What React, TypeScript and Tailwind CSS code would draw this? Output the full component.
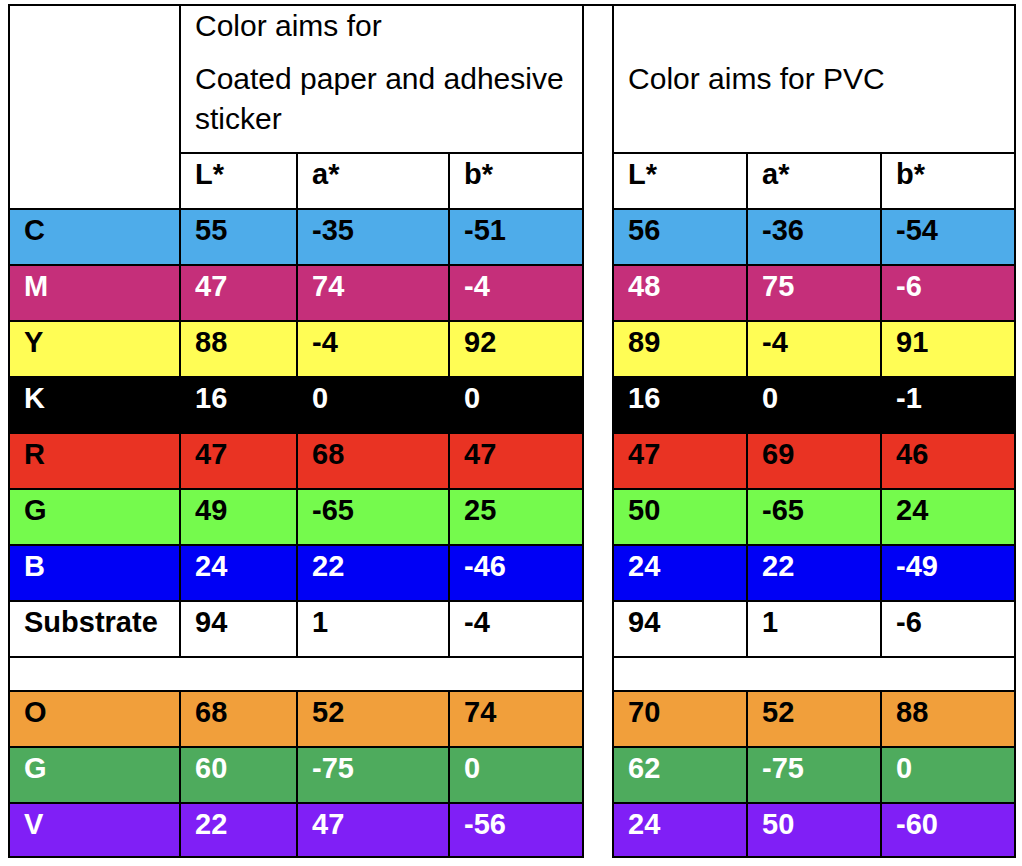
type Row = {
  label: string
  left: string[]
  right: string[]
  bg: string
  fg: string
  h: string
}

const top: Row[] = [
  { label: "C", left: ["55", "-35", "-51"], right: ["56", "-36", "-54"], bg: "bg-[#4eacea]", fg: "text-black", h: "h-[56px]" },
  { label: "M", left: ["47", "74", "-4"], right: ["48", "75", "-6"], bg: "bg-[#c52f7a]", fg: "text-white", h: "h-[56px]" },
  { label: "Y", left: ["88", "-4", "92"], right: ["89", "-4", "91"], bg: "bg-[#fffd55]", fg: "text-black", h: "h-[56px]" },
  { label: "K", left: ["16", "0", "0"], right: ["16", "0", "-1"], bg: "bg-black", fg: "text-white", h: "h-[56px]" },
  { label: "R", left: ["47", "68", "47"], right: ["47", "69", "46"], bg: "bg-[#e93323]", fg: "text-black", h: "h-[56px]" },
  { label: "G", left: ["49", "-65", "25"], right: ["50", "-65", "24"], bg: "bg-[#75fa4d]", fg: "text-black", h: "h-[56px]" },
  { label: "B", left: ["24", "22", "-46"], right: ["24", "22", "-49"], bg: "bg-[#0000f5]", fg: "text-white", h: "h-[56px]" },
  { label: "Substrate", left: ["94", "1", "-4"], right: ["94", "1", "-6"], bg: "bg-white", fg: "text-black", h: "h-[56px]" },
]

const bottom: Row[] = [
  { label: "O", left: ["68", "52", "74"], right: ["70", "52", "88"], bg: "bg-[#f19f3b]", fg: "text-black", h: "h-[56px]" },
  { label: "G", left: ["60", "-75", "0"], right: ["62", "-75", "0"], bg: "bg-[#4eab5d]", fg: "text-white", h: "h-[56px]" },
  { label: "V", left: ["22", "47", "-56"], right: ["24", "50", "-60"], bg: "bg-[#801ff6]", fg: "text-white", h: "h-[54px]" },
]

const cell = "border-2 border-black align-top pl-[14px] pt-0 leading-[40px]"

function DataRow({ row }: { row: Row }) {
  return (
    <tr className={`${row.h} ${row.bg} ${row.fg} font-bold text-[29px]`}>
      <td className={cell}>{row.label}</td>
      {row.left.map((v, i) => (
        <td key={"l" + i} className={cell}>{v}</td>
      ))}
      {row.right.map((v, i) => (
        <td key={"r" + i} className={cell}>{v}</td>
      ))}
    </tr>
  )
}

export default function App() {
  return (
    <div className="bg-white min-h-[866px] w-[1022px] pl-[8px] pt-[4px] font-['Liberation_Sans',Arial,sans-serif] text-black">
      <table className="table-fixed border-collapse w-[1006px]">
        <colgroup>
          <col className="w-[171px]" />
          <col className="w-[117px]" />
          <col className="w-[152px]" />
          <col className="w-[134px]" />
          <col className="w-[30px]" />
          <col className="w-[134px]" />
          <col className="w-[134px]" />
          <col className="w-[134px]" />
        </colgroup>
        <tbody>
          <tr className="h-[148px] text-[30px]">
            <td rowSpan={2} className="border-2 border-black" />
            <td colSpan={3} className="border-2 border-black align-top pl-[14px] pr-2 leading-[40px]">
              <p className="mb-[13px]">Color aims for</p>
              <p className="pb-[12px]">Coated paper and adhesive sticker</p>
            </td>
            <td rowSpan={14} className="border-x-2 border-t-2 border-b-0 border-black bg-white" />
            <td colSpan={3} className="border-2 border-black align-middle pl-[14px] leading-[40px]">
              Color aims for PVC
            </td>
          </tr>
          <tr className="h-[56px] font-bold text-[29px]">
            {["L*", "a*", "b*", "L*", "a*", "b*"].map((t, i) => (
              <td key={i} className={cell}>{t}</td>
            ))}
          </tr>
          {top.map((r, i) => (
            <DataRow key={"t" + i} row={r} />
          ))}
          <tr className="h-[34px]">
            <td colSpan={4} className="border-2 border-black" />
            <td colSpan={3} className="border-2 border-black" />
          </tr>
          {bottom.map((r, i) => (
            <DataRow key={"b" + i} row={r} />
          ))}
        </tbody>
      </table>
    </div>
  )
}
